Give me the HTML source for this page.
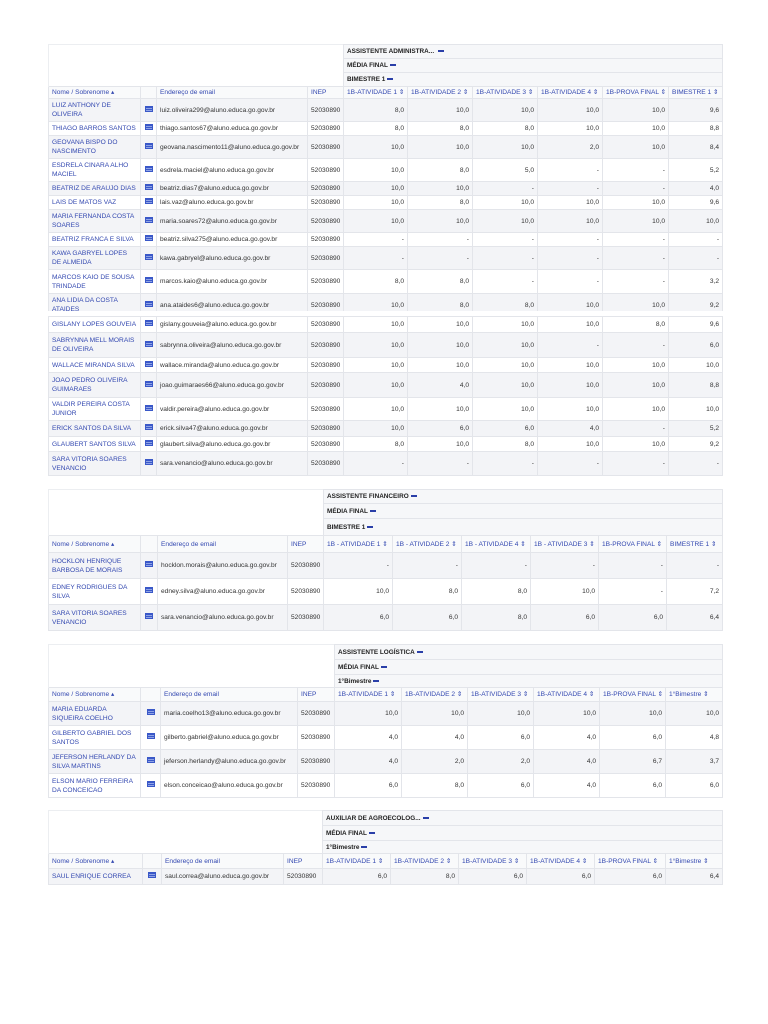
<!DOCTYPE html>
<html><head><meta charset="utf-8"><style>
body{margin:0;width:768px;height:1024px;background:#fff;position:relative;overflow:hidden;font-family:"Liberation Sans",sans-serif;}
table{position:absolute;border-collapse:collapse;table-layout:fixed;font-size:6.6px;color:#333;}
td{border:1px solid #e3e5ea;padding:0 3px;overflow:hidden;line-height:9px;vertical-align:middle;}
tr.g td{background:#f3f4f7;}
td.e{background:#fff;border:none;border-top:1px solid #eceef1;border-left:1px solid #eceef1;border-right:1px solid #e3e5ea}
td.gh{background:#f6f7f9;font-weight:bold;color:#222;font-size:6.4px;}
tr.h td{color:#3348b0;background:#f9fafb;white-space:nowrap}
td.n{color:#3348b0;}
td.r{text-align:right}
td.i{text-align:center}
.ic{display:inline-block;width:8px;height:6px;background:repeating-linear-gradient(#3a58c8 0 1px,#8fa3e6 1px 2px);border:1px solid #3a58c8;box-sizing:border-box}
.m{display:inline-block;width:6px;height:2px;background:#2a3fa8;vertical-align:middle;margin-left:2px}
</style></head><body>

<div style="position:absolute;left:48px;top:44px;width:675px;height:267px;overflow:hidden">
<table style="left:0;top:0;width:674px">
<colgroup><col style="width:92px"><col style="width:16px"><col style="width:151px"><col style="width:36px"><col style="width:64px"><col style="width:65px"><col style="width:65px"><col style="width:65px"><col style="width:66px"><col style="width:54px"></colgroup>
<tr style="height:14px"><td class="e" colspan="4" rowspan="3"></td><td class="gh" colspan="6">ASSISTENTE ADMINISTRA... <span class="m"></span></td></tr>
<tr style="height:14px"><td class="gh" colspan="6">MÉDIA FINAL<span class="m"></span></td></tr>
<tr style="height:14px"><td class="gh" colspan="6">BIMESTRE 1<span class="m"></span></td></tr>
<tr class="h" style="height:12px"><td>Nome / Sobrenome ▴</td><td></td><td>Endereço de email</td><td>INEP</td><td>1B-ATIVIDADE 1 ⇕</td><td>1B-ATIVIDADE 2 ⇕</td><td>1B-ATIVIDADE 3 ⇕</td><td>1B-ATIVIDADE 4 ⇕</td><td>1B-PROVA FINAL ⇕</td><td>BIMESTRE 1 ⇕</td></tr>
<tr class="g" style="height:23px"><td class="n">LUIZ ANTHONY DE OLIVEIRA</td><td class="i"><span class="ic"></span></td><td>luiz.oliveira299@aluno.educa.go.gov.br</td><td>52030890</td><td class="r">8,0</td><td class="r">10,0</td><td class="r">10,0</td><td class="r">10,0</td><td class="r">10,0</td><td class="r">9,6</td></tr>
<tr style="height:14px"><td class="n">THIAGO BARROS SANTOS</td><td class="i"><span class="ic"></span></td><td>thiago.santos67@aluno.educa.go.gov.br</td><td>52030890</td><td class="r">8,0</td><td class="r">8,0</td><td class="r">8,0</td><td class="r">10,0</td><td class="r">10,0</td><td class="r">8,8</td></tr>
<tr class="g" style="height:23px"><td class="n">GEOVANA BISPO DO NASCIMENTO</td><td class="i"><span class="ic"></span></td><td>geovana.nascimento11@aluno.educa.go.gov.br</td><td>52030890</td><td class="r">10,0</td><td class="r">10,0</td><td class="r">10,0</td><td class="r">2,0</td><td class="r">10,0</td><td class="r">8,4</td></tr>
<tr style="height:23px"><td class="n">ESDRELA CINARA ALHO MACIEL</td><td class="i"><span class="ic"></span></td><td>esdrela.maciel@aluno.educa.go.gov.br</td><td>52030890</td><td class="r">10,0</td><td class="r">8,0</td><td class="r">5,0</td><td class="r">-</td><td class="r">-</td><td class="r">5,2</td></tr>
<tr class="g" style="height:14px"><td class="n">BEATRIZ DE ARAUJO DIAS</td><td class="i"><span class="ic"></span></td><td>beatriz.dias7@aluno.educa.go.gov.br</td><td>52030890</td><td class="r">10,0</td><td class="r">10,0</td><td class="r">-</td><td class="r">-</td><td class="r">-</td><td class="r">4,0</td></tr>
<tr style="height:14px"><td class="n">LAIS DE MATOS VAZ</td><td class="i"><span class="ic"></span></td><td>lais.vaz@aluno.educa.go.gov.br</td><td>52030890</td><td class="r">10,0</td><td class="r">8,0</td><td class="r">10,0</td><td class="r">10,0</td><td class="r">10,0</td><td class="r">9,6</td></tr>
<tr class="g" style="height:23px"><td class="n">MARIA FERNANDA COSTA SOARES</td><td class="i"><span class="ic"></span></td><td>maria.soares72@aluno.educa.go.gov.br</td><td>52030890</td><td class="r">10,0</td><td class="r">10,0</td><td class="r">10,0</td><td class="r">10,0</td><td class="r">10,0</td><td class="r">10,0</td></tr>
<tr style="height:14px"><td class="n">BEATRIZ FRANCA E SILVA</td><td class="i"><span class="ic"></span></td><td>beatriz.silva275@aluno.educa.go.gov.br</td><td>52030890</td><td class="r">-</td><td class="r">-</td><td class="r">-</td><td class="r">-</td><td class="r">-</td><td class="r">-</td></tr>
<tr class="g" style="height:23px"><td class="n">KAWA GABRYEL LOPES DE ALMEIDA</td><td class="i"><span class="ic"></span></td><td>kawa.gabryel@aluno.educa.go.gov.br</td><td>52030890</td><td class="r">-</td><td class="r">-</td><td class="r">-</td><td class="r">-</td><td class="r">-</td><td class="r">-</td></tr>
<tr style="height:24px"><td class="n">MARCOS KAIO DE SOUSA TRINDADE</td><td class="i"><span class="ic"></span></td><td>marcos.kaio@aluno.educa.go.gov.br</td><td>52030890</td><td class="r">8,0</td><td class="r">8,0</td><td class="r">-</td><td class="r">-</td><td class="r">-</td><td class="r">3,2</td></tr>
<tr class="g" style="height:23px"><td class="n">ANA LIDIA DA COSTA ATAIDES</td><td class="i"><span class="ic"></span></td><td>ana.ataides6@aluno.educa.go.gov.br</td><td>52030890</td><td class="r">10,0</td><td class="r">8,0</td><td class="r">8,0</td><td class="r">10,0</td><td class="r">10,0</td><td class="r">9,2</td></tr>
</table></div>

<table style="left:48px;top:316px;width:674px">
<colgroup><col style="width:92px"><col style="width:16px"><col style="width:151px"><col style="width:36px"><col style="width:64px"><col style="width:65px"><col style="width:65px"><col style="width:65px"><col style="width:66px"><col style="width:54px"></colgroup>
<tr style="height:16px"><td class="n">GISLANY LOPES GOUVEIA</td><td class="i"><span class="ic"></span></td><td>gislany.gouveia@aluno.educa.go.gov.br</td><td>52030890</td><td class="r">10,0</td><td class="r">10,0</td><td class="r">10,0</td><td class="r">10,0</td><td class="r">8,0</td><td class="r">9,6</td></tr>
<tr class="g" style="height:25px"><td class="n">SABRYNNA MELL MORAIS DE OLIVEIRA</td><td class="i"><span class="ic"></span></td><td>sabrynna.oliveira@aluno.educa.go.gov.br</td><td>52030890</td><td class="r">10,0</td><td class="r">10,0</td><td class="r">10,0</td><td class="r">-</td><td class="r">-</td><td class="r">6,0</td></tr>
<tr style="height:15px"><td class="n">WALLACE MIRANDA SILVA</td><td class="i"><span class="ic"></span></td><td>wallace.miranda@aluno.educa.go.gov.br</td><td>52030890</td><td class="r">10,0</td><td class="r">10,0</td><td class="r">10,0</td><td class="r">10,0</td><td class="r">10,0</td><td class="r">10,0</td></tr>
<tr class="g" style="height:25px"><td class="n">JOAO PEDRO OLIVEIRA GUIMARAES</td><td class="i"><span class="ic"></span></td><td>joao.guimaraes66@aluno.educa.go.gov.br</td><td>52030890</td><td class="r">10,0</td><td class="r">4,0</td><td class="r">10,0</td><td class="r">10,0</td><td class="r">10,0</td><td class="r">8,8</td></tr>
<tr style="height:23px"><td class="n">VALDIR PEREIRA COSTA JUNIOR</td><td class="i"><span class="ic"></span></td><td>valdir.pereira@aluno.educa.go.gov.br</td><td>52030890</td><td class="r">10,0</td><td class="r">10,0</td><td class="r">10,0</td><td class="r">10,0</td><td class="r">10,0</td><td class="r">10,0</td></tr>
<tr class="g" style="height:16px"><td class="n">ERICK SANTOS DA SILVA</td><td class="i"><span class="ic"></span></td><td>erick.silva47@aluno.educa.go.gov.br</td><td>52030890</td><td class="r">10,0</td><td class="r">6,0</td><td class="r">6,0</td><td class="r">4,0</td><td class="r">-</td><td class="r">5,2</td></tr>
<tr style="height:15px"><td class="n">GLAUBERT SANTOS SILVA</td><td class="i"><span class="ic"></span></td><td>glaubert.silva@aluno.educa.go.gov.br</td><td>52030890</td><td class="r">8,0</td><td class="r">10,0</td><td class="r">8,0</td><td class="r">10,0</td><td class="r">10,0</td><td class="r">9,2</td></tr>
<tr class="g" style="height:24px"><td class="n">SARA VITORIA SOARES VENANCIO</td><td class="i"><span class="ic"></span></td><td>sara.venancio@aluno.educa.go.gov.br</td><td>52030890</td><td class="r">-</td><td class="r">-</td><td class="r">-</td><td class="r">-</td><td class="r">-</td><td class="r">-</td></tr>
</table>

<table style="left:48px;top:489px;width:674px">
<colgroup><col style="width:92px"><col style="width:17px"><col style="width:130px"><col style="width:36px"><col style="width:69px"><col style="width:69px"><col style="width:69px"><col style="width:68px"><col style="width:68px"><col style="width:56px"></colgroup>
<tr style="height:14px"><td class="e" colspan="4" rowspan="3"></td><td class="gh" colspan="6">ASSISTENTE FINANCEIRO<span class="m"></span></td></tr>
<tr style="height:15px"><td class="gh" colspan="6">MÉDIA FINAL<span class="m"></span></td></tr>
<tr style="height:17px"><td class="gh" colspan="6">BIMESTRE 1<span class="m"></span></td></tr>
<tr class="h" style="height:17px"><td>Nome / Sobrenome ▴</td><td></td><td>Endereço de email</td><td>INEP</td><td>1B - ATIVIDADE 1 ⇕</td><td>1B - ATIVIDADE 2 ⇕</td><td>1B - ATIVIDADE 4 ⇕</td><td>1B - ATIVIDADE 3 ⇕</td><td>1B-PROVA FINAL ⇕</td><td>BIMESTRE 1 ⇕</td></tr>
<tr class="g" style="height:26px"><td class="n">HOCKLON HENRIQUE BARBOSA DE MORAIS</td><td class="i"><span class="ic"></span></td><td>hocklon.morais@aluno.educa.go.gov.br</td><td>52030890</td><td class="r">-</td><td class="r">-</td><td class="r">-</td><td class="r">-</td><td class="r">-</td><td class="r">-</td></tr>
<tr style="height:26px"><td class="n">EDNEY RODRIGUES DA SILVA</td><td class="i"><span class="ic"></span></td><td>edney.silva@aluno.educa.go.gov.br</td><td>52030890</td><td class="r">10,0</td><td class="r">8,0</td><td class="r">8,0</td><td class="r">10,0</td><td class="r">-</td><td class="r">7,2</td></tr>
<tr class="g" style="height:26px"><td class="n">SARA VITORIA SOARES VENANCIO</td><td class="i"><span class="ic"></span></td><td>sara.venancio@aluno.educa.go.gov.br</td><td>52030890</td><td class="r">6,0</td><td class="r">6,0</td><td class="r">8,0</td><td class="r">6,0</td><td class="r">6,0</td><td class="r">6,4</td></tr>
</table>

<table style="left:48px;top:644px;width:674px">
<colgroup><col style="width:92px"><col style="width:20px"><col style="width:137px"><col style="width:37px"><col style="width:67px"><col style="width:66px"><col style="width:66px"><col style="width:66px"><col style="width:66px"><col style="width:57px"></colgroup>
<tr style="height:15px"><td class="e" colspan="4" rowspan="3"></td><td class="gh" colspan="6">ASSISTENTE LOGÍSTICA<span class="m"></span></td></tr>
<tr style="height:15px"><td class="gh" colspan="6">MÉDIA FINAL<span class="m"></span></td></tr>
<tr style="height:13px"><td class="gh" colspan="6">1°Bimestre<span class="m"></span></td></tr>
<tr class="h" style="height:14px"><td>Nome / Sobrenome ▴</td><td></td><td>Endereço de email</td><td>INEP</td><td>1B-ATIVIDADE 1 ⇕</td><td>1B-ATIVIDADE 2 ⇕</td><td>1B-ATIVIDADE 3 ⇕</td><td>1B-ATIVIDADE 4 ⇕</td><td>1B-PROVA FINAL ⇕</td><td>1°Bimestre ⇕</td></tr>
<tr class="g" style="height:24px"><td class="n">MARIA EDUARDA SIQUEIRA COELHO</td><td class="i"><span class="ic"></span></td><td>maria.coelho13@aluno.educa.go.gov.br</td><td>52030890</td><td class="r">10,0</td><td class="r">10,0</td><td class="r">10,0</td><td class="r">10,0</td><td class="r">10,0</td><td class="r">10,0</td></tr>
<tr style="height:24px"><td class="n">GILBERTO GABRIEL DOS SANTOS</td><td class="i"><span class="ic"></span></td><td>gilberto.gabriel@aluno.educa.go.gov.br</td><td>52030890</td><td class="r">4,0</td><td class="r">4,0</td><td class="r">6,0</td><td class="r">4,0</td><td class="r">6,0</td><td class="r">4,8</td></tr>
<tr class="g" style="height:24px"><td class="n">JEFERSON HERLANDY DA SILVA MARTINS</td><td class="i"><span class="ic"></span></td><td>jeferson.herlandy@aluno.educa.go.gov.br</td><td>52030890</td><td class="r">4,0</td><td class="r">2,0</td><td class="r">2,0</td><td class="r">4,0</td><td class="r">6,7</td><td class="r">3,7</td></tr>
<tr style="height:24px"><td class="n">ELSON MARIO FERREIRA DA CONCEICAO</td><td class="i"><span class="ic"></span></td><td>elson.conceicao@aluno.educa.go.gov.br</td><td>52030890</td><td class="r">6,0</td><td class="r">8,0</td><td class="r">6,0</td><td class="r">4,0</td><td class="r">6,0</td><td class="r">6,0</td></tr>
</table>

<table style="left:48px;top:810px;width:674px">
<colgroup><col style="width:94px"><col style="width:19px"><col style="width:122px"><col style="width:39px"><col style="width:68px"><col style="width:68px"><col style="width:68px"><col style="width:68px"><col style="width:71px"><col style="width:57px"></colgroup>
<tr style="height:15px"><td class="e" colspan="4" rowspan="3"></td><td class="gh" colspan="6">AUXILIAR DE AGROECOLOG...<span class="m"></span></td></tr>
<tr style="height:15px"><td class="gh" colspan="6">MÉDIA FINAL<span class="m"></span></td></tr>
<tr style="height:13px"><td class="gh" colspan="6">1°Bimestre<span class="m"></span></td></tr>
<tr class="h" style="height:15px"><td>Nome / Sobrenome ▴</td><td></td><td>Endereço de email</td><td>INEP</td><td>1B-ATIVIDADE 1 ⇕</td><td>1B-ATIVIDADE 2 ⇕</td><td>1B-ATIVIDADE 3 ⇕</td><td>1B-ATIVIDADE 4 ⇕</td><td>1B-PROVA FINAL ⇕</td><td>1°Bimestre ⇕</td></tr>
<tr class="g" style="height:16px"><td class="n">SAUL ENRIQUE CORREA</td><td class="i"><span class="ic"></span></td><td>saul.correa@aluno.educa.go.gov.br</td><td>52030890</td><td class="r">6,0</td><td class="r">8,0</td><td class="r">6,0</td><td class="r">6,0</td><td class="r">6,0</td><td class="r">6,4</td></tr>
</table>
</body></html>
